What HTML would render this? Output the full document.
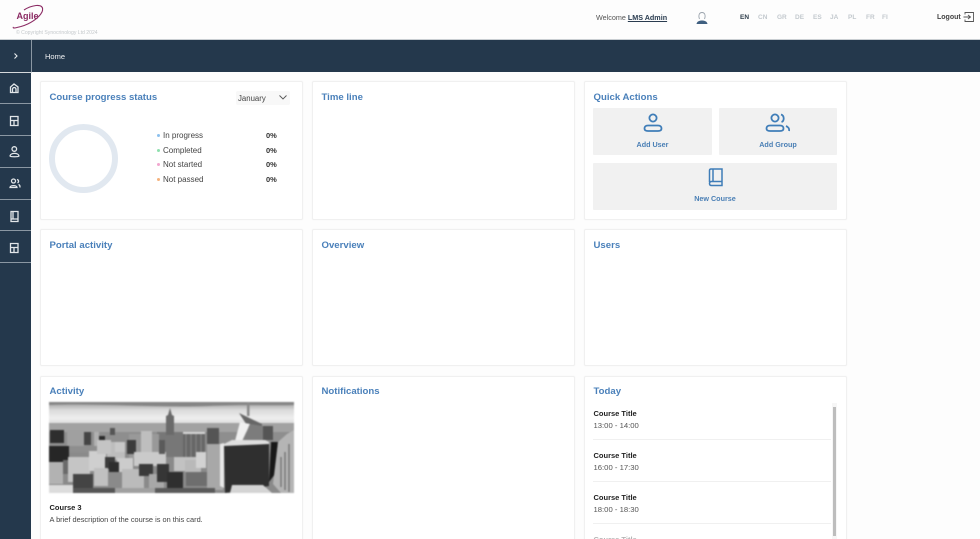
<!DOCTYPE html>
<html lang="en"><head><meta charset="utf-8"><title>LMS Dashboard</title>
<style>
*{box-sizing:border-box}
html,body{margin:0;padding:0;width:980px;height:539px;overflow:hidden;background:#fdfdfd;font-family:"Liberation Sans",sans-serif;color:#222}
#w{position:absolute;left:0;top:0;width:980px;height:539px;overflow:hidden;filter:blur(.3px)}
.a{position:absolute}
.t{position:absolute;white-space:nowrap;line-height:12px}
.card{position:absolute;background:#fff;border:1px solid #f0f0f0;border-radius:2px;box-shadow:0 0 1px #eee}
.h{position:absolute;white-space:nowrap;font-weight:bold;font-size:9.6px;line-height:14px;color:#4a80ba}
.side{position:absolute;left:0;width:31px;height:1px;background:#8b97a3}
.btn{position:absolute;background:#f1f1f1;border-radius:1px}
.lbl{position:absolute;left:0;right:0;text-align:center;font-size:7.200px;font-weight:bold;color:#4a7fb5;line-height:10px}
.lang{position:absolute;top:12.500px;font-size:6.500px;line-height:10px;color:#c3c9ce;font-weight:bold}
.leg{font-size:8px;color:#444}
.pc{font-size:7.500px;font-weight:bold;color:#333}
.dot{position:absolute;width:3px;height:3px;border-radius:50%}
.ct{font-size:7.500px;font-weight:bold;color:#222}
.tm{font-size:7.700px;color:#555}
.sep{position:absolute;left:593px;width:238px;height:1px;background:#f0f0f0}
</style></head><body><div id="w">
<!-- header -->
<svg class="a" style="left:12px;top:3px" width="34" height="26" viewBox="0 0 34 26"><path d="M1.500 24C0 26 5 24.500 9 23.500C18 21 27 15 30 9C32 4 29 2 24 2.500C20 3 15 5 12 7" fill="none" stroke="#8b2a63" stroke-width="1.100"/></svg>
<div class="t" style="left:16.500px;top:9.500px;font-size:9px;font-weight:bold;color:#8b2a63;line-height:12px">Agile</div>
<div class="t" style="left:16px;top:29px;font-size:5.100px;color:#c4c8cb;line-height:8px">© Copyright Synocrinology Ltd 2024</div>
<div class="t" style="left:596px;top:11.500px;font-size:7.200px;color:#555">Welcome <b style="color:#2a3c50;text-decoration:underline">LMS Admin</b></div>
<svg class="a" style="left:695px;top:11px" width="14" height="14" viewBox="0 0 14 14"><path d="M4.500 8C3 4 4.500 1.500 7 1.500C9.500 1.500 11 4 9.500 8" fill="none" stroke="#9aa3ac" stroke-width="0.900"/><path d="M1.500 13C2 10.500 4 9.500 7 9.500C10 9.500 12 10.500 12.500 13Z" fill="#3f5f80"/></svg>
<div class="lang" style="left:740px;color:#2b3a48">EN</div><div class="lang" style="left:758px">CN</div><div class="lang" style="left:777px">GR</div><div class="lang" style="left:795px">DE</div><div class="lang" style="left:813px">ES</div><div class="lang" style="left:830px">JA</div><div class="lang" style="left:848px">PL</div><div class="lang" style="left:866px">FR</div><div class="lang" style="left:882px">FI</div>
<div class="t" style="left:937px;top:11.500px;font-size:7px;font-weight:bold;color:#444">Logout</div>
<svg class="a" style="left:963px;top:11px" width="12" height="12" viewBox="0 0 12 12"><path d="M2 3.500V1.500H10.500V10.500H2V8.500M0.500 6H7M5 4L7.500 6L5 8" fill="none" stroke="#555" stroke-width="0.900"/></svg>
<!-- topbar -->
<div class="a" style="left:0;top:39px;width:980px;height:1px;background:#c9ced2"></div>
<div class="a" style="left:0;top:40px;width:980px;height:32px;background:#24384c"></div>
<div class="a" style="left:31px;top:40px;width:1px;height:32px;background:#8b97a3"></div>
<div class="t" style="left:45px;top:50.500px;font-size:7.500px;color:#f0f2f4">Home</div>
<svg class="a" style="left:12px;top:52px" width="7" height="8" viewBox="0 0 7 8"><path d="M2.500 1.500L5 4L2.500 6.500" fill="none" stroke="#e8ecef" stroke-width="1.100"/></svg>
<!-- sidebar -->
<div class="a" style="left:0;top:72px;width:31px;height:467px;background:#24384c"></div>
<div class="a" style="left:0;top:72px;width:32px;height:1px;background:#d5d9dc"></div>
<div class="side" style="top:103px"></div><div class="side" style="top:135px"></div><div class="side" style="top:167px"></div><div class="side" style="top:199px"></div><div class="side" style="top:230px"></div><div class="side" style="top:262px"></div>
<svg class="a" style="left:0;top:72px" width="31" height="190" viewBox="0 0 31 190">
<g fill="none" stroke="#e2e6e9" stroke-width="1.300">
<path d="M10.500 20.500V15L14 12L18 15V20.500ZM12.500 20.500V17C13 15 15.500 15 16 17V20.500"/>
<path d="M10.500 44.500H18V53.500H10.500ZM10.500 48.500H18M14 48.500V53.500"/>
<circle cx="14.300" cy="77" r="2.300"/><path d="M10 84C10.500 80.500 18.500 80.500 19 84C18.500 85 10.500 85 10 84Z"/>
<circle cx="13.500" cy="109" r="2"/><path d="M10 115.500C10 113 17 113 17 115.500ZM17 107.500C19 108 19 110 17.500 111M18.500 112.500C20 113 20 114 20 115.500"/>
<path d="M11 139.500H18V149.500H11ZM11.500 147H18M13 139.500V147"/>
<path d="M10.500 171.500H18V180.500H10.500ZM10.500 175.500H18M14 175.500V180.500"/>
</g></svg>
<!-- cards -->
<div class="card" style="left:40px;top:81px;width:263px;height:139px"></div>
<div class="card" style="left:312px;top:81px;width:263px;height:139px"></div>
<div class="card" style="left:584px;top:81px;width:263px;height:139px"></div>
<div class="card" style="left:40px;top:229px;width:263px;height:137px"></div>
<div class="card" style="left:312px;top:229px;width:263px;height:137px"></div>
<div class="card" style="left:584px;top:229px;width:263px;height:137px"></div>
<div class="card" style="left:40px;top:376px;width:263px;height:170px"></div>
<div class="card" style="left:312px;top:376px;width:263px;height:170px"></div>
<div class="card" style="left:584px;top:376px;width:263px;height:170px"></div>
<div class="h" style="left:49.500px;top:90.500px">Course progress status</div>
<div class="h" style="left:321.500px;top:90.500px">Time line</div>
<div class="h" style="left:593.500px;top:90.500px">Quick Actions</div>
<div class="h" style="left:49.500px;top:238.500px">Portal activity</div>
<div class="h" style="left:321.500px;top:238.500px">Overview</div>
<div class="h" style="left:593.500px;top:238.500px">Users</div>
<div class="h" style="left:49.500px;top:384.500px">Activity</div>
<div class="h" style="left:321.500px;top:384.500px">Notifications</div>
<div class="h" style="left:593.500px;top:384.500px">Today</div>
<!-- progress -->
<div class="a" style="left:236px;top:91px;width:54px;height:14px;background:#f8f8f8;border-radius:2px"></div>
<div class="t" style="left:238px;top:92.500px;font-size:7.800px;color:#444">January</div>
<svg class="a" style="left:278px;top:94px" width="10" height="7" viewBox="0 0 10 7"><path d="M1.500 1.500L5 5L8.500 1.500" fill="none" stroke="#555" stroke-width="0.900"/></svg>
<div class="a" style="left:49px;top:124px;width:69px;height:69px;border-radius:50%;border:6px solid #e1e8f0"></div>
<div class="dot" style="left:157px;top:134px;background:#8cc0ee"></div><div class="t leg" style="left:163px;top:129.500px">In progress</div><div class="t pc" style="left:266px;top:129.500px">0%</div>
<div class="dot" style="left:157px;top:149px;background:#8ee0ae"></div><div class="t leg" style="left:163px;top:144.500px">Completed</div><div class="t pc" style="left:266px;top:144.500px">0%</div>
<div class="dot" style="left:157px;top:163px;background:#f2a6cf"></div><div class="t leg" style="left:163px;top:158.500px">Not started</div><div class="t pc" style="left:266px;top:158.500px">0%</div>
<div class="dot" style="left:157px;top:178px;background:#f5b27c"></div><div class="t leg" style="left:163px;top:173.500px">Not passed</div><div class="t pc" style="left:266px;top:173.500px">0%</div>
<!-- quick actions -->
<div class="btn" style="left:593px;top:108px;width:119px;height:47px"><div class="lbl" style="top:32px">Add User</div></div>
<div class="btn" style="left:719px;top:108px;width:118px;height:47px"><div class="lbl" style="top:32px">Add Group</div></div>
<div class="btn" style="left:593px;top:163px;width:244px;height:47px"><div class="lbl" style="top:31px">New Course</div></div>
<svg class="a" style="left:640px;top:112px" width="26" height="22" viewBox="0 0 26 22"><g fill="none" stroke="#3f7db8" stroke-width="1.800"><circle cx="13" cy="6" r="3.600"/><path d="M8 13.500H18C20.500 13.500 21.500 15 21.500 16.500C21.500 18 20.500 19 18 19H8C5.500 19 4.500 18 4.500 16.500C4.500 15 5.500 13.500 8 13.500Z"/></g></svg>
<svg class="a" style="left:764px;top:112px" width="28" height="22" viewBox="0 0 28 22"><g fill="none" stroke="#3f7db8" stroke-width="1.800"><circle cx="11" cy="6" r="3.600"/><path d="M6 13.500H16C18.500 13.500 19.500 15 19.500 16.500C19.500 18 18.500 19 16 19H6C3.500 19 2.500 18 2.500 16.500C2.500 15 3.500 13.500 6 13.500Z"/><path d="M17 2.500C20.500 3.500 20.500 9 17.500 10M22 14C24.500 15 25.500 17 25 19"/></g></svg>
<svg class="a" style="left:706px;top:167px" width="20" height="22" viewBox="0 0 20 22"><g fill="none" stroke="#3f7db8" stroke-width="1.500"><path d="M3.500 15V3.500C3.500 2.500 4 2 5 2H16V14.500H5.500C4 14.500 3.500 15.500 3.500 16.500C3.500 18 4.500 18.500 5.500 18.500H16V14.500"/><path d="M7 2V14.500"/></g></svg>
<!-- activity image -->
<svg class="a" style="left:49px;top:402px;filter:blur(.7px)" width="245" height="91" viewBox="0 0 245 91">
<defs><linearGradient id="s" x1="0" y1="0" x2="0" y2="1"><stop offset="0" stop-color="#9a9a9a"/><stop offset=".35" stop-color="#dadada"/><stop offset=".7" stop-color="#eeeeee"/><stop offset="1" stop-color="#d8d8d8"/></linearGradient></defs>
<rect width="245" height="91" fill="#8a8a8a"/><rect width="245" height="23" fill="url(#s)"/>
<path d="M0 3C50 1 110 6 160 4C200 2 225 4 245 3V0H0Z" fill="#858585"/>
<rect y="21" width="245" height="9" fill="#a2a2a2"/>
<rect y="30" width="245" height="20" fill="#8e8e8e"/>
<rect x="108" y="30" width="30" height="25" fill="#777"/>
<rect x="80" y="32" width="30" height="24" fill="#999"/>
<path d="M117 33V14L119 13L121 6L123 13L125 14V33Z" fill="#6a6a6a"/>
<rect x="1" y="28" width="14" height="13" fill="#2e2e2e"/><rect x="18" y="28" width="17" height="16" fill="#a0a0a0"/><rect x="35" y="30" width="7" height="13" fill="#444"/><rect x="45" y="30" width="5" height="14" fill="#b0b0b0"/><rect x="50" y="34" width="6" height="14" fill="#2a2a2a"/><rect x="61" y="26" width="5" height="7" fill="#555"/><rect x="58" y="40" width="18" height="18" fill="#bdbdbd"/><rect x="66" y="40" width="10" height="10" fill="#c8c8c8"/><rect x="78" y="38" width="9" height="14" fill="#3c3c3c"/>
<rect x="92" y="29" width="11" height="23" fill="#bebebe"/><rect x="85" y="50" width="32" height="14" fill="#cacaca"/>
<rect x="110" y="38" width="6" height="14" fill="#5a5a5a"/>
<rect x="134" y="30" width="22" height="27" fill="#676767"/><path d="M134 30H156V32H134Z" fill="#d8d8d8"/><path d="M137 32V57M142 32V57M147 32V57M152 32V57" stroke="#888" stroke-width="1"/>
<rect x="158" y="26" width="12" height="20" fill="#555"/>
<path d="M190 11L213 22V34H205Z" fill="#666"/><path d="M191 20L201 22L193 39L186 39Z" fill="#f0f0f0"/><path d="M201 22L214 24V38L194 39Z" fill="#7c7c7c"/><rect x="198" y="0" width="2.500" height="14" fill="#888"/><rect x="214" y="24" width="10" height="14" fill="#555"/>
<rect x="0" y="44" width="20" height="16" fill="#262626"/><rect x="0" y="60" width="14" height="22" fill="#b2b2b2"/><rect x="14" y="58" width="10" height="14" fill="#6a6a6a"/><rect x="19" y="55" width="22" height="25" fill="#c5c5c5"/><rect x="24" y="72" width="20" height="15" fill="#444"/>
<rect x="40" y="49" width="17" height="20" fill="#cfcfcf"/><rect x="48" y="38" width="14" height="14" fill="#c4c4c4"/><rect x="56" y="55" width="10" height="12" fill="#3c3c3c"/><rect x="45" y="66" width="14" height="18" fill="#c0c0c0"/>
<rect x="68" y="56" width="16" height="14" fill="#cccccc"/><rect x="60" y="60" width="10" height="10" fill="#2d2d2d"/><rect x="73" y="67" width="22" height="21" fill="#bbbbbb"/><rect x="90" y="62" width="14" height="12" fill="#3a3a3a"/>
<rect x="100" y="72" width="15" height="15" fill="#a8a8a8"/><rect x="108" y="62" width="12" height="18" fill="#363636"/><rect x="118" y="70" width="16" height="18" fill="#2f2f2f"/><rect x="125" y="55" width="22" height="14" fill="#c2c2c2"/>
<rect x="136" y="58" width="16" height="12" fill="#b9b9b9"/><rect x="147" y="50" width="10" height="16" fill="#d2d2d2"/><rect x="137" y="70" width="23" height="14" fill="#6e6e6e"/>
<rect x="158" y="42" width="16" height="46" fill="#a8a8a8"/><path d="M171 42L175 41V86L171 84Z" fill="#e8e8e8"/>
<path d="M175 42L220 40V84L176 91Z" fill="#2f2f2f"/><path d="M175 42L183 38H216L220 40V42L175 44Z" fill="#dfdfdf"/>
<path d="M222 40H229L226 72L220 80Z" fill="#191919"/><path d="M229 40L238 32L245 28V91H232L224 82Z" fill="#b5b5b5"/><path d="M232 55V85M236 50V88M240 42V90" stroke="#6a6a6a" stroke-width="1.200"/>
<path d="M183 83H214L223 91H181Z" fill="#d4d4d4"/>
<rect x="0" y="83" width="24" height="8" fill="#dcdcdc"/><rect x="24" y="86" width="42" height="5" fill="#555"/><rect x="66" y="86" width="40" height="5" fill="#a0a0a0"/><rect x="106" y="86" width="60" height="5" fill="#5a5a5a"/>
</svg>
<div class="t ct" style="left:49.500px;top:501.500px">Course 3</div>
<div class="t" style="left:49.500px;top:514px;font-size:7.400px;color:#444">A brief description of the course is on this card.</div>
<!-- today -->
<div class="t ct" style="left:593.500px;top:408px">Course Title</div><div class="t tm" style="left:593.500px;top:420px">13:00 - 14:00</div>
<div class="sep" style="top:439px"></div>
<div class="t ct" style="left:593.500px;top:450px">Course Title</div><div class="t tm" style="left:593.500px;top:462px">16:00 - 17:30</div>
<div class="sep" style="top:481px"></div>
<div class="t ct" style="left:593.500px;top:492px">Course Title</div><div class="t tm" style="left:593.500px;top:504px">18:00 - 18:30</div>
<div class="sep" style="top:523px"></div>
<div class="t ct" style="left:593.500px;top:534px;color:#b5b5b5">Course Title</div>
<div class="a" style="left:832px;top:403px;width:5px;height:136px;background:#f6f6f6"></div>
<div class="a" style="left:833px;top:407px;width:3px;height:129px;background:#bdbdbd"></div>
</div></body></html>
